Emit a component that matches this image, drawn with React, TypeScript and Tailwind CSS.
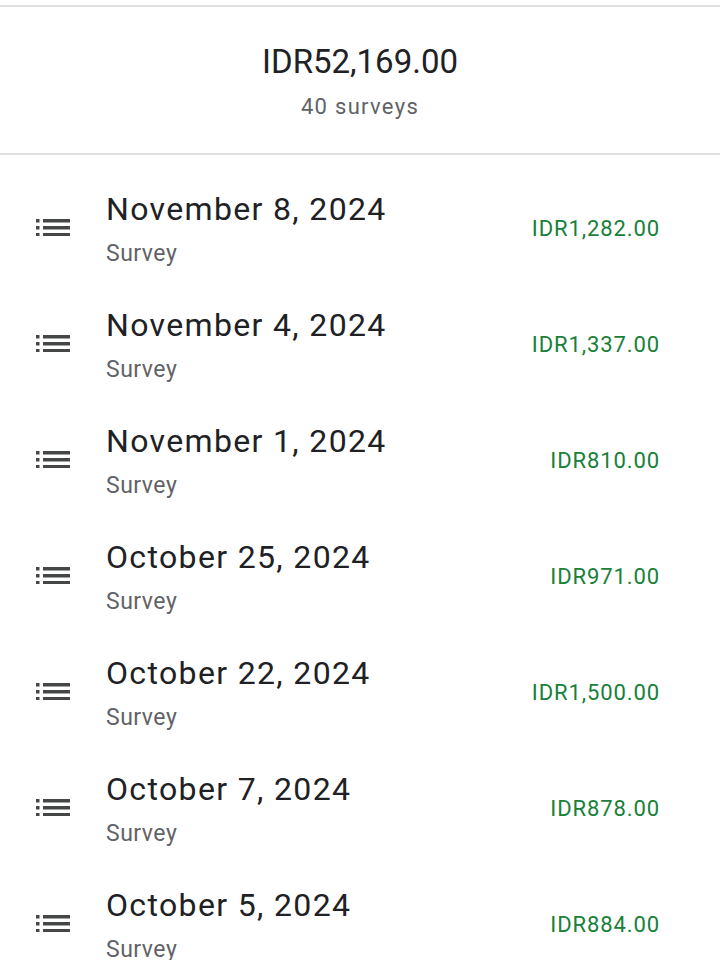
import React from "react";

const rows = [
  { date: "November 8, 2024", amount: "IDR1,282.00" },
  { date: "November 4, 2024", amount: "IDR1,337.00" },
  { date: "November 1, 2024", amount: "IDR810.00" },
  { date: "October 25, 2024", amount: "IDR971.00" },
  { date: "October 22, 2024", amount: "IDR1,500.00" },
  { date: "October 7, 2024", amount: "IDR878.00" },
  { date: "October 5, 2024", amount: "IDR884.00" },
];

function ListIcon() {
  return (
    <svg width="34" height="17" viewBox="0 0 34 17" className="shrink-0">
      <rect x="0" y="0" width="3.5" height="3.5" fill="#444746" />
      <rect x="7" y="0" width="27" height="3.5" fill="#444746" />
      <rect x="0" y="7" width="3.5" height="3.5" fill="#444746" />
      <rect x="7" y="7" width="27" height="3.5" fill="#444746" />
      <rect x="0" y="14" width="3.5" height="3.5" fill="#444746" />
      <rect x="7" y="14" width="27" height="3.5" fill="#444746" />
    </svg>
  );
}

export default function App() {
  return (
    <div
      className="w-[720px] h-[960px] overflow-hidden bg-white"
      style={{ fontFamily: "Roboto, 'Noto Sans', sans-serif" }}
    >
      <div className="mt-[5px] border-y-2 border-[#e0e0e0] pt-[35px] pb-[31px] flex flex-col items-center">
        <div className="text-[33px] leading-[40px] text-[#202124]">IDR52,169.00</div>
        <div className="mt-[10px] text-[22px] leading-[30px] tracking-[1.3px] text-[#5f6368]">40 surveys</div>
      </div>
      <div className="pt-[14px]">
        {rows.map((r) => (
          <div key={r.date} className="h-[116px] flex items-center pl-[36px] pr-[60px]">
            <ListIcon />
            <div className="ml-[36px] pt-[5px] flex-1 flex flex-col">
              <div className="text-[32px] leading-[40px] tracking-[1.35px] text-[#202124]">{r.date}</div>
              <div className="mt-[9px] text-[23px] leading-[32px] tracking-[0.5px] text-[#5f6368]">Survey</div>
            </div>
            <div className="pt-[4px] text-[22px] leading-[30px] tracking-[0.9px] text-[#188038]">{r.amount}</div>
          </div>
        ))}
      </div>
    </div>
  );
}
